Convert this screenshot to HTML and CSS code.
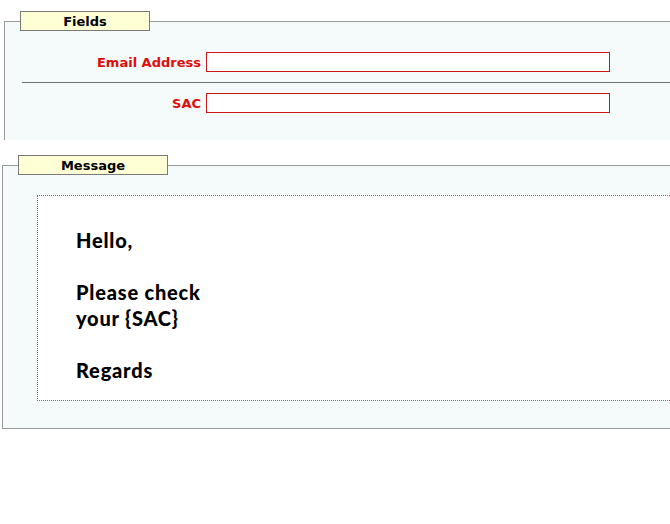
FILE: index.html
```html
<!DOCTYPE html>
<html lang="en">
<head>
  <meta charset="UTF-8" />
  <title>Message Template</title>
  <link rel="stylesheet" href="styles.css">
</head>
<body>

  <!-- Fields -->
  <fieldset class="panel fields">
    <legend><span>Fields</span></legend>
    <div class="rows">
      <div class="row">
        <label for="email">Email Address</label>
        <input type="text" id="email" autofocus />
      </div>
      <div class="row">
        <label for="sac">SAC</label>
        <input type="text" id="sac" />
      </div>
    </div>
  </fieldset>

  <!-- Message -->
  <fieldset class="panel message">
    <legend><span>Message</span></legend>
    <div class="message-box">
      <div class="message-text">
        Hello,<br><br>
        Please check your {SAC}<br><br>
        Regards
      </div>
    </div>
  </fieldset>

</body>
</html>
```

FILE: styles.css
```css
*, *::before, *::after {
  box-sizing: border-box;
}

:root {
  --color-panel: #f5fbfb;
  --color-border: #9a9a9a;
  --color-legend: #ffffd6;
  --color-red: #e00d0d;
  --color-input: #c81818;
}

html, body {
  margin: 0;
  padding: 0;
  overflow: hidden;
  background-color: #ffffff;
  font-family: 'DejaVu Sans', Verdana, sans-serif;
}

.panel {
  min-width: 0;
  background-color: var(--color-panel);
  border: 1px solid var(--color-border);
  border-right: none;
  padding: 0 0 0 15px;
}

.panel legend {
  padding: 0;
  height: 20px;
  background-color: var(--color-legend);
  border: 1px solid #7a7a7a;
}

.panel legend span {
  display: block;
  padding-top: 1px;
  line-height: 18px;
  text-align: center;
  font-size: 13px;
  font-weight: 700;
  color: #000;
}

/* Fields */

.fields {
  margin: 11px 0 0 4px;
  padding-top: 11px;
  padding-bottom: 17px;
  border-bottom: none;
}

.fields legend {
  width: 130px;
}

.rows {
  margin-left: 2px;
}

.row {
  display: flex;
  align-items: center;
  padding: 10px 0;
}

.row + .row {
  border-top: 1px solid #707070;
}

.row label {
  width: 179px;
  margin-right: 5px;
  text-align: right;
  font-size: 13px;
  font-weight: 700;
  color: var(--color-red);
}

.row input {
  width: 404px;
  height: 20px;
  margin: 0;
  padding: 0 2px;
  border: 1px solid var(--color-input);
  border-radius: 0;
  background: #fff;
  font-size: 12px;
  outline: none;
}

/* Message */

.message {
  margin: 15px 0 0 2px;
  padding-top: 20px;
  padding-bottom: 27px;
}

.message legend {
  width: 150px;
}

.message-box {
  margin-left: 19px;
  background: #fff;
  border: 1px dotted #b05252;
  border-right: none;
  padding: 31px 0 17px 38px;
}

.message-text {
  width: 160px;
  font-family: 'Lato', 'Open Sans', sans-serif;
  font-size: 20px;
  font-weight: 900;
  letter-spacing: 0.8px;
  line-height: 26px;
  color: #000;
}
```
